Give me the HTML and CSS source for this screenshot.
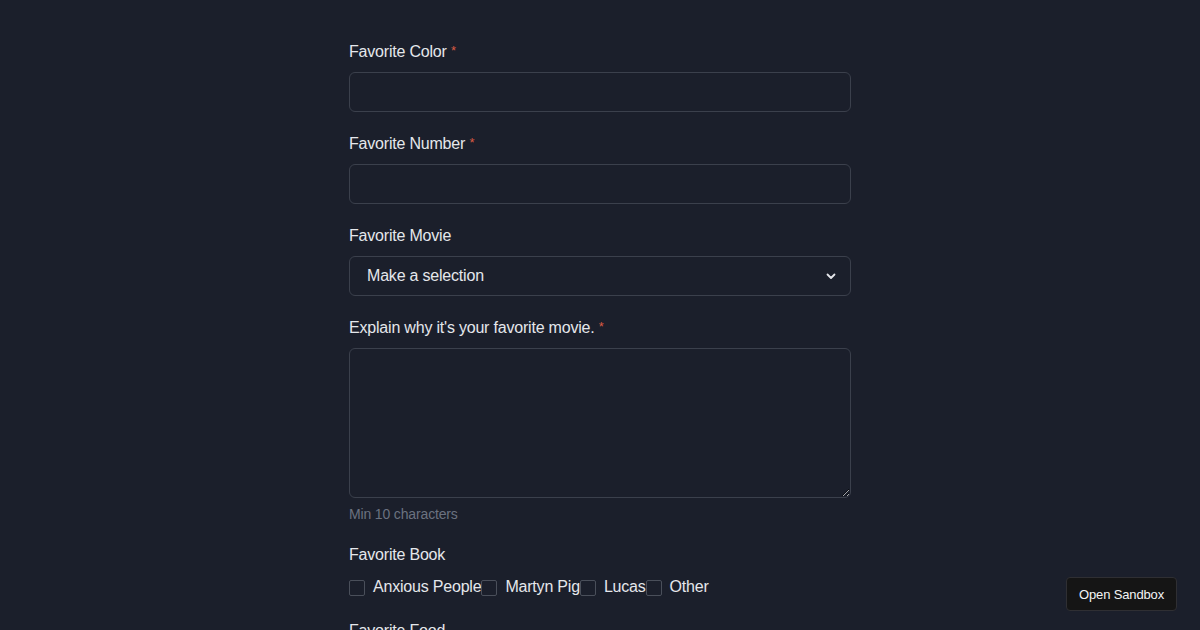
FILE: index.html
```html
<!DOCTYPE html>
<html lang="en">
<head>
<meta charset="utf-8">
<title>Form</title>
<link rel="stylesheet" href="styles.css">
</head>
<body>
<main class="page">
  <form class="form">
    <div class="field">
      <label class="label">Favorite Color <span class="req">*</span></label>
      <input class="input" type="text">
    </div>
    <div class="field">
      <label class="label">Favorite Number <span class="req">*</span></label>
      <input class="input" type="text">
    </div>
    <div class="field">
      <label class="label">Favorite Movie</label>
      <div class="select">
        <span>Make a selection</span>
        <svg class="chev" width="12" height="12" viewBox="0 0 12 12"><path d="M2.5 4.5 L6 8 L9.5 4.5" fill="none" stroke="#e5e7eb" stroke-width="1.8" stroke-linecap="round" stroke-linejoin="round"/></svg>
      </div>
    </div>
    <div class="field">
      <label class="label">Explain why it's your favorite movie. <span class="req">*</span></label>
      <textarea class="textarea"></textarea>
      <div class="hint">Min 10 characters</div>
    </div>
    <div class="field">
      <label class="label">Favorite Book</label>
      <div class="checks">
        <label class="check"><span class="box"></span><span class="ctext">Anxious People</span></label>
        <label class="check"><span class="box"></span><span class="ctext">Martyn Pig</span></label>
        <label class="check"><span class="box"></span><span class="ctext">Lucas</span></label>
        <label class="check"><span class="box"></span><span class="ctext">Other</span></label>
      </div>
    </div>
    <div class="field">
      <label class="label">Favorite Food</label>
    </div>
  </form>
</main>
<button class="sandbox" type="button">Open Sandbox</button>
</body>
</html>
```
FILE: styles.css
```css
html, body {
  margin: 0;
  padding: 0;
  background: #1b1f2b;
  height: 100%;
  overflow: hidden;
}
body {
  font-family: "Liberation Sans", Arial, sans-serif;
  color: #e5e7eb;
}
.page {
  display: flex;
  justify-content: center;
  padding-top: 40px;
}
.form {
  width: 502px;
  display: flex;
  flex-direction: column;
  gap: 20px;
}
.field {
  display: flex;
  flex-direction: column;
}
.label {
  font-size: 16px;
  line-height: 24px;
  letter-spacing: -0.2px;
  margin-bottom: 8px;
  color: #e5e7eb;
}
.req {
  color: #d95a43;
  font-size: 13px;
  vertical-align: 2px;
  line-height: 1;
  letter-spacing: 0;
}
.input, .select, .textarea {
  box-sizing: border-box;
  width: 100%;
  background: #1b1f2b;
  border: 1px solid #3b404c;
  border-radius: 6px;
  margin: 0;
}
.input {
  height: 40px;
}
.select {
  height: 40px;
  display: flex;
  align-items: center;
  justify-content: space-between;
  padding: 0 13px 0 17px;
  font-size: 16px;
  letter-spacing: -0.2px;
  color: #e5e7eb;
}
.chev {
  display: block;
}
.textarea {
  height: 150px;
  resize: vertical;
  display: block;
}
.hint {
  font-size: 14px;
  line-height: 20px;
  letter-spacing: -0.15px;
  margin-top: 6px;
  margin-bottom: -1px;
  color: #6b7280;
}
.checks {
  display: flex;
  align-items: center;
  height: 24px;
}
.check {
  display: flex;
  align-items: center;
  font-size: 16px;
  line-height: 24px;
  letter-spacing: -0.2px;
}
.box {
  box-sizing: border-box;
  width: 16px;
  height: 16px;
  border: 1px solid #4a4f5a;
  border-radius: 2px;
  margin-right: 8px;
  margin-top: 1px;
}
.sandbox {
  position: fixed;
  right: 23px;
  bottom: 19px;
  height: 34px;
  padding: 0 12px;
  background: #151515;
  border: 1px solid #2f2f33;
  border-radius: 4px;
  color: #f3f4f6;
  font-family: "Liberation Sans", Arial, sans-serif;
  font-size: 13px;
  letter-spacing: -0.15px;
}
```
